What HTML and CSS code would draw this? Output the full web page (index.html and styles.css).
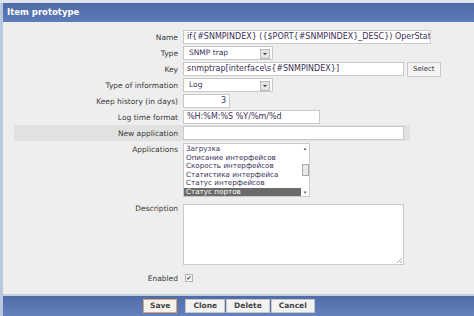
FILE: index.html
```html
<!DOCTYPE html>
<html lang="en">
<head>
  <meta charset="UTF-8">
  <title>Item prototype</title>
  <link rel="stylesheet" href="styles.css">
</head>
<body>

  <div class="frame">
    <div class="header">Item prototype</div>

    <div class="form">
      <div class="row">
        <div class="lbl">Name</div>
        <div class="val"><div class="field w-name">if{#SNMPINDEX} ({$PORT{#SNMPINDEX}_DESC}) OperStatus</div></div>
      </div>
      <div class="row">
        <div class="lbl">Type</div>
        <div class="val"><div class="select w-sel">SNMP trap<span class="drop"></span></div></div>
      </div>
      <div class="row">
        <div class="lbl">Key</div>
        <div class="val">
          <div class="field w-key">snmptrap[interface\s{#SNMPINDEX}]</div>
          <div class="btn-small">Select</div>
        </div>
      </div>
      <div class="row">
        <div class="lbl">Type of information</div>
        <div class="val"><div class="select w-sel">Log<span class="drop"></span></div></div>
      </div>
      <div class="row">
        <div class="lbl">Keep history (in days)</div>
        <div class="val"><div class="field w-days num">3</div></div>
      </div>
      <div class="row">
        <div class="lbl">Log time format</div>
        <div class="val"><div class="field w-fmt">%H:%M:%S %Y/%m/%d</div></div>
      </div>
      <div class="row hl">
        <div class="lbl">New application</div>
        <div class="val"><div class="field w-key"></div></div>
      </div>
      <div class="row tall">
        <div class="lbl">Applications</div>
        <div class="val">
          <div class="listbox">
            <div class="items">
              <div>Загрузка</div>
              <div>Описание интерфейсов</div>
              <div>Скорость интерфейсов</div>
              <div>Статистика интерфейса</div>
              <div>Статус интерфейсов</div>
              <div class="sel">Статус портов</div>
            </div>
            <div class="scroll">
              <span class="up">&#9652;</span>
              <span class="thumb"></span>
              <span class="down">&#9662;</span>
            </div>
          </div>
        </div>
      </div>
      <div class="row desc">
        <div class="lbl">Description</div>
        <div class="val"><div class="textarea"><span class="grip"></span></div></div>
      </div>
      <div class="row">
        <div class="lbl">Enabled</div>
        <div class="val"><div class="check">&#10004;</div></div>
      </div>
    </div>

    <div class="footer">
      <div class="btn save">Save</div>
      <div class="group">
        <div class="btn">Clone</div>
        <div class="btn">Delete</div>
        <div class="btn">Cancel</div>
      </div>
    </div>
  </div>

</body>
</html>
```

FILE: styles.css
```css
body {
  margin: 0;
  background: #dde4ee;
  font-family: "DejaVu Sans", sans-serif;
  font-size: 7.5px;
  color: #3a3a3a;
  width: 474px;
  height: 316px;
  overflow: hidden;
}

.frame {
  margin-top: 3px;
  border-left: 3px solid #b8c8de;
  background: #eeeeee;
  height: 313px;
  display: flex;
  flex-direction: column;
}

.header {
  height: 19px;
  line-height: 19px;
  padding-left: 4px;
  background: linear-gradient(#4d6aa6, #5d7cba);
  color: #fff;
  font-weight: bold;
  font-size: 8.5px;
}

.form {
  flex: 1;
  padding-top: 7px;
}

.row {
  display: flex;
  align-items: center;
  height: 16px;
}

.row.hl {
  background: #e1e1e1;
  margin-left: 11px;
  margin-right: 64px;
}

.row.hl .lbl {
  width: 164px;
}

.lbl {
  width: 175px;
  text-align: right;
  padding-right: 5px;
  flex-shrink: 0;
}

.val {
  display: flex;
  align-items: center;
  gap: 3px;
}

.field, .select {
  box-sizing: border-box;
  height: 14px;
  line-height: 12px;
  border: 1px solid #c9c9c9;
  background: #fff;
  padding: 0 3px;
  color: #3b3157;
  font-size: 8px;
  white-space: nowrap;
  overflow: hidden;
}

.select {
  font-size: 7.5px;
}

.w-name { width: 248px; }
.w-key { width: 221px; }
.w-sel { width: 90px; }
.w-days { width: 47px; }
.w-fmt { width: 137px; }

.num {
  text-align: right;
}

.select {
  position: relative;
  padding-left: 5px;
}

.drop {
  position: absolute;
  right: 2px;
  top: 2px;
  width: 8px;
  height: 8px;
  border: 1px solid #bbb;
  background: #e4e4e4;
}

.drop::after {
  content: "";
  position: absolute;
  left: 2px;
  top: 3px;
  border-left: 2px solid transparent;
  border-right: 2px solid transparent;
  border-top: 2px solid #333;
}

.btn-small {
  box-sizing: border-box;
  height: 15px;
  line-height: 13px;
  padding: 0 5px;
  border: 1px solid #c9c9c9;
  background: #f4f4f4;
  color: #333;
  font-size: 7px;
}

.row.tall {
  height: 59px;
  align-items: flex-start;
}

.row.tall .lbl {
  padding-top: 4px;
}

.listbox {
  margin-top: 2px;
  box-sizing: border-box;
  width: 127px;
  height: 54px;
  border: 1px solid #c9c9c9;
  background: #fff;
  display: flex;
  color: #3b3157;
  font-size: 7.2px;
}

.items {
  flex: 1;
  padding-top: 1px;
}

.items div {
  height: 8.5px;
  line-height: 8.5px;
  padding-left: 2px;
}

.items .sel {
  background: #6b6b6b;
  color: #fff;
}

.scroll {
  width: 8px;
  display: flex;
  flex-direction: column;
  align-items: center;
  justify-content: space-between;
  font-size: 5px;
  color: #555;
  padding: 1px 0;
}

.thumb {
  width: 5px;
  height: 10px;
  border: 1px solid #aaa;
  background: #e8e8e8;
}

.row.desc {
  height: 68px;
  align-items: flex-start;
}

.row.desc .lbl {
  padding-top: 4px;
}

.textarea {
  position: relative;
  margin-top: 4px;
  box-sizing: border-box;
  width: 221px;
  height: 61px;
  border: 1px solid #c9c9c9;
  background: #fff;
}

.grip {
  position: absolute;
  right: 1px;
  bottom: 1px;
  width: 5px;
  height: 5px;
  background: linear-gradient(135deg, transparent 45%, #aaa 45%, #aaa 55%, transparent 55%, transparent 70%, #aaa 70%, #aaa 80%, transparent 80%);
}

.row:last-child {
  margin-top: 2px;
}

.check {
  box-sizing: border-box;
  margin-left: 2px;
  width: 8px;
  height: 8px;
  line-height: 6px;
  text-align: center;
  border: 1px solid #b5b5b5;
  background: #f4f4f4;
  font-size: 6px;
  color: #333;
}

.footer {
  height: 20px;
  border-top: 2px solid #c7cfdc;
  background: linear-gradient(#4f6ca8, #6481bd);
  display: flex;
  align-items: center;
  padding-left: 140px;
  gap: 8px;
}

.group {
  display: flex;
  gap: 1px;
}

.btn {
  box-sizing: border-box;
  height: 14px;
  line-height: 12px;
  padding: 0 7px;
  border: 1px solid #c6c6c6;
  background: #f2f2f2;
  font-weight: bold;
  color: #444;
  font-size: 7.5px;
}

.btn.save {
  border-color: #d6a777;
  background: #f6f1ea;
  padding: 0 6px;
}
```
